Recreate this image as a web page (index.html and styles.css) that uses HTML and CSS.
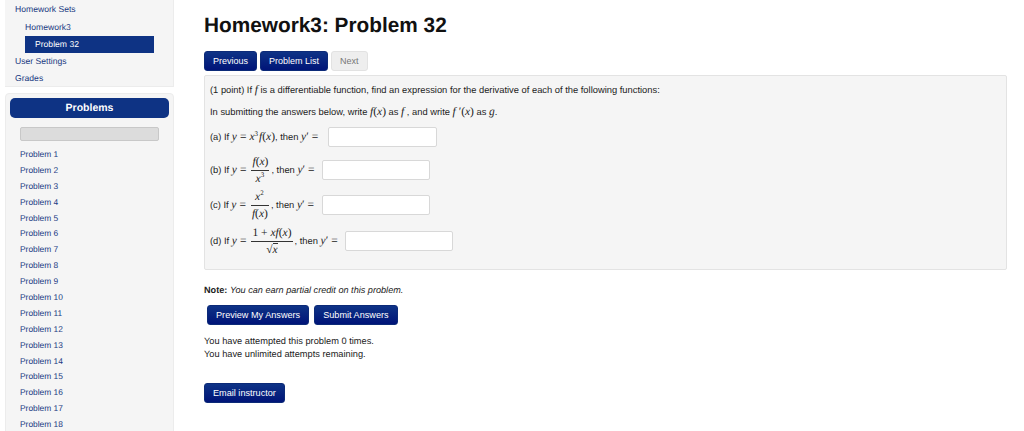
FILE: index.html
```html
<!DOCTYPE html>
<html lang="en">
<head>
  <meta charset="UTF-8">
  <title>Homework3: Problem 32</title>
  <link rel="stylesheet" href="styles.css">
</head>
<body>
  <div class="sidebar">
    <div class="panel nav-panel">
      <a class="nav-item">Homework Sets</a>
      <a class="nav-item sub">Homework3</a>
      <a class="nav-item current">Problem 32</a>
      <a class="nav-item">User Settings</a>
      <a class="nav-item">Grades</a>
    </div>
    <div class="panel problems-panel">
      <div class="problems-title">Problems</div>
      <div class="progress-bar"></div>
      <ul class="problem-list">
        <li>Problem 1</li>
        <li>Problem 2</li>
        <li>Problem 3</li>
        <li>Problem 4</li>
        <li>Problem 5</li>
        <li>Problem 6</li>
        <li>Problem 7</li>
        <li>Problem 8</li>
        <li>Problem 9</li>
        <li>Problem 10</li>
        <li>Problem 11</li>
        <li>Problem 12</li>
        <li>Problem 13</li>
        <li>Problem 14</li>
        <li>Problem 15</li>
        <li>Problem 16</li>
        <li>Problem 17</li>
        <li>Problem 18</li>
      </ul>
    </div>
  </div>

  <div class="main">
    <h1>Homework3: Problem 32</h1>
    <div class="nav-buttons">
      <button class="btn">Previous</button>
      <button class="btn">Problem List</button>
      <button class="btn disabled">Next</button>
    </div>

    <div class="problem-box">
      <p class="line first">(1 point) If <i class="m">f</i> is a differentiable function, find an expression for the derivative of each of the following functions:</p>
      <p class="line second">In submitting the answers below, write <i class="m">f</i><span class="m">(<i>x</i>)</span> as <i class="m">f</i> , and write <i class="m">f</i><span class="m"> &prime;(<i>x</i>)</span> as <i class="m">g</i>.</p>

      <div class="answer row-a">
        <span>(a) If <i class="m">y</i><span class="m eq">=</span><i class="m">x</i><sup class="exp">3</sup><i class="m">f</i><span class="m">(<i>x</i>)</span>, then <i class="m">y</i><span class="m">&prime;</span><span class="m eq">=</span></span>
        <input class="ans" type="text">
      </div>

      <div class="answer row-b">
        <span>(b) If <i class="m">y</i><span class="m eq">=</span></span>
        <span class="frac"><span class="top m"><i>f</i>(<i>x</i>)</span><span class="bottom m"><i>x</i><sup class="exp">3</sup></span></span>
        <span>, then <i class="m">y</i><span class="m">&prime;</span><span class="m eq">=</span></span>
        <input class="ans" type="text">
      </div>

      <div class="answer row-c">
        <span>(c) If <i class="m">y</i><span class="m eq">=</span></span>
        <span class="frac"><span class="top m"><i>x</i><sup class="exp">2</sup></span><span class="bottom m"><i>f</i>(<i>x</i>)</span></span>
        <span>, then <i class="m">y</i><span class="m">&prime;</span><span class="m eq">=</span></span>
        <input class="ans" type="text">
      </div>

      <div class="answer row-d">
        <span>(d) If <i class="m">y</i><span class="m eq">=</span></span>
        <span class="frac"><span class="top m">1 + <i>xf</i>(<i>x</i>)</span><span class="bottom m">&radic;<i class="root">x</i></span></span>
        <span>, then <i class="m">y</i><span class="m">&prime;</span><span class="m eq">=</span></span>
        <input class="ans" type="text">
      </div>
    </div>

    <p class="note"><b>Note:</b> <i>You can earn partial credit on this problem.</i></p>

    <div class="submit-buttons">
      <button class="btn">Preview My Answers</button>
      <button class="btn">Submit Answers</button>
    </div>

    <p class="attempts">You have attempted this problem 0 times.<br>You have unlimited attempts remaining.</p>

    <button class="btn email">Email instructor</button>
  </div>
</body>
</html>
```

FILE: styles.css
```css
body {
  margin: 0;
  height: 431px;
  overflow: hidden;
  display: flex;
  align-items: flex-start;
  background-color: #fff;
  color: #222;
  font-family: "Liberation Sans", Arial, sans-serif;
  font-size: 9.25px;
  text-rendering: geometricPrecision;
}

/* Sidebar */
.sidebar {
  width: 169px;
  margin-left: 5px;
  flex-shrink: 0;
  font-size: 8.4px;
}

.panel {
  background-color: #f5f5f5;
  border: 1px solid #ececec;
  box-sizing: border-box;
}

.nav-panel {
  height: 88px;
  margin-top: -1px;
  padding-top: 2px;
  border-top: none;
  border-left: none;
  font-size: 8.6px;
}

.nav-item {
  display: block;
  height: 17px;
  line-height: 17px;
  padding-left: 10px;
  color: #1a3a82;
}

.nav-item.sub {
  padding-left: 20px;
  margin-top: 1px;
}

.nav-item.current {
  width: 119px;
  margin-left: 20px;
  padding-left: 10px;
  background-color: #0e3384;
  color: #fff;
}

.problems-panel {
  margin-top: 6px;
  height: 345px;
  border-radius: 4px 4px 0 0;
  padding: 4px 4px 0;
}

.problems-title {
  height: 20px;
  line-height: 20px;
  background-color: #0e3384;
  border-radius: 5px;
  color: #fff;
  text-align: center;
  font-size: 10.5px;
  font-weight: bold;
}

.progress-bar {
  height: 14px;
  margin: 9px 10px 0;
  background-color: #dcdcdc;
  border: 1px solid #c8c8c8;
  border-radius: 2px;
  box-sizing: border-box;
}

.problem-list {
  list-style: none;
  margin: 6px 0 0;
  padding: 0 0 0 10px;
  color: #1a3a82;
}

.problem-list li {
  height: 15.9px;
  line-height: 15.9px;
}

/* Main column */
.main {
  width: 803px;
  margin-left: 30px;
}

h1 {
  margin: 14px 0 0;
  height: 24px;
  line-height: 24px;
  font-size: 20.8px;
  font-weight: bold;
  color: #111;
}

.nav-buttons {
  display: flex;
  gap: 3px;
  margin-top: 13px;
}

.btn {
  height: 20px;
  padding: 0 8px;
  background: linear-gradient(#0e3386, #001478);
  border: 1px solid #0c2a78;
  border-radius: 3px;
  color: #fff;
  font-family: "Liberation Sans", Arial, sans-serif;
  font-size: 9px;
  line-height: 18px;
}

.btn.disabled {
  background: #eeeeee;
  border-color: #e2e2e2;
  color: #777;
}

.problem-box {
  height: 195px;
  margin-top: 4px;
  padding: 0 0 0 5px;
  background-color: #f5f5f5;
  border: 1px solid #e3e3e3;
  border-radius: 2px;
  box-sizing: border-box;
  font-size: 9.35px;
}

.line {
  margin: 0;
  height: 14px;
  line-height: 14px;
}

.line.first {
  margin-top: 7px;
}

.line.second {
  margin-top: 8px;
}

.m {
  font-family: "Liberation Serif", "Times New Roman", serif;
  font-size: 11.5px;
}

.eq {
  margin: 0 3px;
}

.exp {
  font-family: "Liberation Serif", "Times New Roman", serif;
  font-size: 7px;
  line-height: 0;
  margin-right: 1px;
}

.answer {
  display: flex;
  align-items: center;
  gap: 2px;
}

.row-a {
  margin-top: 7px;
  height: 22px;
}

.row-a .ans {
  width: 109px;
  margin-left: 5px;
}

.row-b {
  margin-top: 11px;
  height: 22px;
}

.row-b .ans,
.row-d .ans {
  margin-left: 2px;
}

.row-c {
  margin-top: 13px;
  height: 22px;
}

.row-d {
  margin-top: 14px;
  height: 22px;
}

.ans {
  width: 108px;
  height: 20px;
  margin-left: 3px;
  padding: 0;
  background-color: #fff;
  border: 1px solid #d8d8d8;
  border-radius: 2px;
  box-sizing: border-box;
}

.frac {
  display: inline-flex;
  flex-direction: column;
  align-items: center;
  line-height: 16px;
}

.frac .top {
  padding: 0 1px;
}

.frac .bottom {
  align-self: stretch;
  padding: 0 1px;
  text-align: center;
  border-top: 1px solid #333;
}

.root {
  border-top: 1px solid #333;
  line-height: 10px;
}

.note {
  margin: 14px 0 0;
  height: 12px;
  line-height: 12px;
  font-size: 9.15px;
}

.submit-buttons {
  display: flex;
  gap: 5px;
  margin: 9px 0 0 3px;
}

.submit-buttons .btn,
.email {
  font-size: 9.15px;
}

.attempts {
  margin: 10px 0 0;
  line-height: 13px;
}

.email {
  display: block;
  margin-top: 22px;
}
```
